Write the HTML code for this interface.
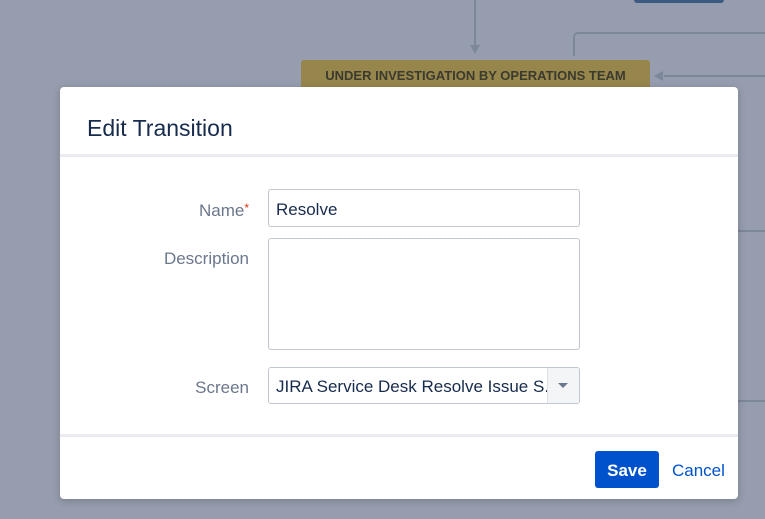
<!DOCTYPE html>
<html><head><style>
*{box-sizing:border-box;margin:0;padding:0}
body{width:765px;height:519px;background:#959dae;position:relative;overflow:hidden;font-family:"Liberation Sans",sans-serif}
.a{position:absolute}
.lbl{position:absolute;color:#6b778c;font-size:16px;text-align:right;width:190px;left:59px}
.inp{position:absolute;left:268px;width:312px;border:1px solid #c1c7d0;border-radius:3px;background:#fff;font-size:17px;color:#172b4d;padding-left:7px}
</style></head><body>
<div class="a" style="left:474px;top:0;width:2px;height:48px;background:#7d879a"></div>
<div class="a" style="left:470px;top:45px;width:0;height:0;border-left:5px solid transparent;border-right:5px solid transparent;border-top:9px solid #7d879a"></div>
<div class="a" style="left:634px;top:0;width:90px;height:3px;background:#3d5a80;border-radius:0 0 3px 3px"></div>
<div class="a" style="left:573px;top:32px;width:200px;height:24px;border-left:2px solid #7d879a;border-top:2px solid #7d879a;border-radius:5px 0 0 0"></div>
<div class="a" style="left:664px;top:75px;width:110px;height:2px;background:#7d879a"></div>
<div class="a" style="left:654px;top:71px;width:0;height:0;border-top:5px solid transparent;border-bottom:5px solid transparent;border-right:9px solid #7d879a"></div>
<div class="a" style="left:301px;top:60px;width:349px;height:30px;background:#97864c;border-radius:3px;color:#3b3a2e;font-size:13px;font-weight:bold;text-align:center;line-height:32px">UNDER INVESTIGATION BY OPERATIONS TEAM</div>
<div class="a" style="left:738px;top:230px;width:30px;height:2px;background:#7d879a"></div>
<div class="a" style="left:738px;top:400px;width:30px;height:2px;background:#7d879a"></div>
<div class="a" style="left:60px;top:87px;width:678px;height:412px;background:#fff;border-radius:4px;box-shadow:0 2px 8px rgba(0,0,0,.2)">
<div class="a" style="left:27px;top:28px;font-size:23px;color:#172b4d">Edit Transition</div>
<div class="a" style="left:0;top:67px;width:678px;height:3px;background:#ebecf0"></div>
<div class="a" style="left:0;top:347px;width:678px;height:3px;background:#ebecf0"></div>
</div>
<div class="lbl" style="top:201px;font-size:17px">Name<span style="color:#de350b;font-size:12px;vertical-align:top">*</span></div>
<div class="inp" style="top:189px;height:38px;line-height:39px">Resolve</div>
<div class="lbl" style="top:249px;font-size:17px">Description</div>
<div class="inp" style="top:238px;height:112px"></div>
<div class="lbl" style="top:378px;font-size:17px">Screen</div>
<div class="inp" style="top:367px;height:37px;line-height:38px;background:#fff;overflow:hidden;white-space:nowrap">JIRA Service Desk Resolve Issue S...
<div class="a" style="right:0;top:0;width:32px;height:35px;border-left:1px solid #dfe1e6;background:#f4f5f7"></div>
<div class="a" style="right:11px;top:15px;width:0;height:0;border-left:5px solid transparent;border-right:5px solid transparent;border-top:5px solid #6b778c"></div>
</div>
<div class="a" style="left:595px;top:451px;width:64px;height:37px;background:#0052cc;border-radius:3px;color:#fff;font-weight:bold;font-size:17px;text-align:center;line-height:39px">Save</div>
<div class="a" style="left:672px;top:461px;color:#0052cc;font-size:17px">Cancel</div>
</body></html>
